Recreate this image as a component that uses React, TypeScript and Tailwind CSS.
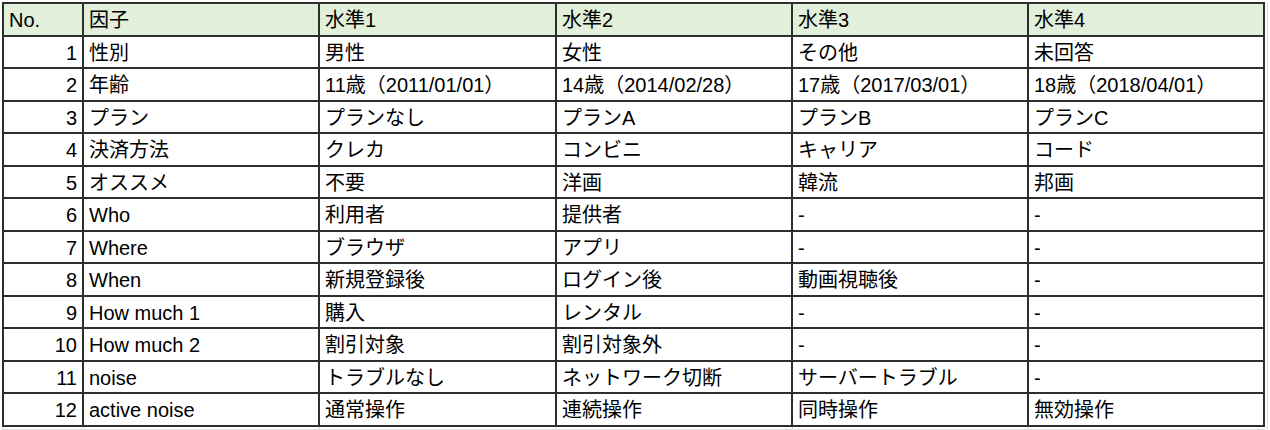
const header = ['No.', '因子', '水準1', '水準2', '水準3', '水準4'];

const rows: [number, string, string, string, string, string][] = [
  [1, '性別', '男性', '女性', 'その他', '未回答'],
  [2, '年齢', '11歳（2011/01/01）', '14歳（2014/02/28）', '17歳（2017/03/01）', '18歳（2018/04/01）'],
  [3, 'プラン', 'プランなし', 'プランA', 'プランB', 'プランC'],
  [4, '決済方法', 'クレカ', 'コンビニ', 'キャリア', 'コード'],
  [5, 'オススメ', '不要', '洋画', '韓流', '邦画'],
  [6, 'Who', '利用者', '提供者', '-', '-'],
  [7, 'Where', 'ブラウザ', 'アプリ', '-', '-'],
  [8, 'When', '新規登録後', 'ログイン後', '動画視聴後', '-'],
  [9, 'How much 1', '購入', 'レンタル', '-', '-'],
  [10, 'How much 2', '割引対象', '割引対象外', '-', '-'],
  [11, 'noise', 'トラブルなし', 'ネットワーク切断', 'サーバートラブル', '-'],
  [12, 'active noise', '通常操作', '連続操作', '同時操作', '無効操作'],
];

const cell = 'h-[30.5px] flex items-center pt-[2px] px-[5px] whitespace-nowrap overflow-hidden';

export default function App() {
  return (
    <div
      className="w-[1270px] h-[430px] bg-white text-black text-[20px] leading-none overflow-hidden pt-[2px] pl-[2px]"
      style={{ fontFamily: '"Liberation Sans", "Noto Sans CJK JP", sans-serif' }}
    >
      <div className="flex items-start gap-[2px]">
        <div className="flex flex-col">
          <div className="grid grid-cols-[78px_234px_235px_234px_234px_234px] gap-[2px] p-[2px] bg-[#2e2e2e]">
            {header.map((h) => (
              <div key={h} className={`${cell} bg-[#e2efda]`}>
                {h}
              </div>
            ))}
            {rows.map((r) =>
              r.map((v, i) => (
                <div
                  key={`${r[0]}-${i}`}
                  className={`${cell} bg-white ${i === 0 ? 'justify-end' : ''}`}
                >
                  {v}
                </div>
              ))
            )}
          </div>
          {/* faint sheet gridlines below the table */}
          <div className="grid grid-cols-[78px_234px_235px_234px_234px_234px] gap-[2px] px-[2px] h-[2px]">
            {header.map((h) => (
              <div key={h} className="border-l border-[#dcdcdc] -ml-[1px]" />
            ))}
          </div>
          <div className="h-px bg-[#dcdcdc]" />
        </div>
        <div className="w-px h-[430px] bg-[#dcdcdc]" />
      </div>
    </div>
  );
}
